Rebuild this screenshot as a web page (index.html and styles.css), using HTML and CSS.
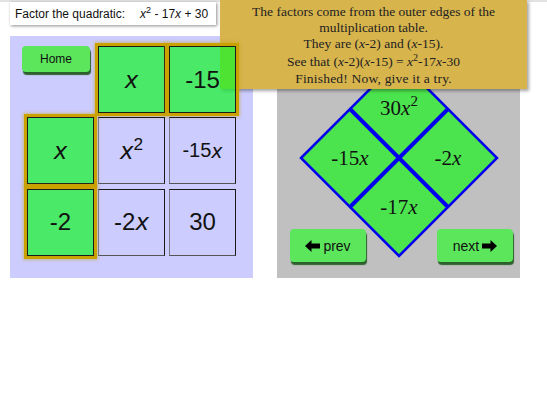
FILE: index.html
```html
<!DOCTYPE html>
<html lang="en">
<head>
<meta charset="utf-8">
<title>Factor the quadratic</title>
<link rel="stylesheet" href="styles.css">
</head>
<body>
<div class="topbar"></div>
<header class="titlebar">
  <div class="title-box">
    <span>Factor the quadratic:</span>
    <span class="expr"><i>x</i><sup>2</sup> - 17<i>x</i> + 30</span>
  </div>
</header>
<main class="panels">
  <section class="table-panel">
    <div class="grid">
      <div class="corner"><button class="btn home">Home</button></div>
      <div class="cell factor"><i class="var">x</i></div>
      <div class="cell factor">-15</div>
      <div class="cell factor"><i class="var">x</i></div>
      <div class="cell product"><span><i class="var">x</i><sup>2</sup></span></div>
      <div class="cell product small">-15<i class="var">x</i></div>
      <div class="cell factor">-2</div>
      <div class="cell product">-2<i class="var">x</i></div>
      <div class="cell product">30</div>
    </div>
  </section>
  <section class="diamond-panel">
    <svg class="diamond" width="243" height="242" viewBox="0 0 243 242">
      <g class="tiles">
        <polygon points="122,24 170.5,72.5 122,121 73.5,72.5"/>
        <polygon points="24,122 72.5,73.5 121,122 72.5,170.5"/>
        <polygon points="123,122 171.5,73.5 220,122 171.5,170.5"/>
        <polygon points="122,123 170.5,171.5 122,220 73.5,171.5"/>
      </g>
      <text x="122" y="79">30<tspan font-style="italic">x</tspan><tspan class="sup" dy="-9">2</tspan></text>
      <text x="73" y="129">-15<tspan font-style="italic">x</tspan></text>
      <text x="171" y="129">-2<tspan font-style="italic">x</tspan></text>
      <text x="122" y="178">-17<tspan font-style="italic">x</tspan></text>
    </svg>
    <div class="nav">
      <button class="btn nav-btn">
        <svg class="arrow" width="15" height="12" viewBox="0 0 15 12"><polygon points="0,6 6.5,0 6.5,3.5 15,3.5 15,8.5 6.5,8.5 6.5,12"/></svg>
        <span>prev</span>
      </button>
      <button class="btn nav-btn">
        <span>next</span>
        <svg class="arrow" width="15" height="12" viewBox="0 0 15 12"><polygon points="15,6 8.5,0 8.5,3.5 0,3.5 0,8.5 8.5,8.5 8.5,12"/></svg>
      </button>
    </div>
  </section>
</main>
<aside class="tip">
  <p>The factors come from the outer edges of the</p>
  <p>multiplication table.</p>
  <p>They are (<i>x</i>-2) and (<i>x</i>-15).</p>
  <p class="l4">See that (<i>x</i>-2)(<i>x</i>-15) = <i>x</i><sup>2</sup>-17<i>x</i>-30</p>
  <p class="l5">Finished! Now, give it a try.</p>
</aside>
</body>
</html>
```

FILE: styles.css
```css
body {
  margin: 0;
  background: #ffffff;
  font-family: "Liberation Sans", Arial, sans-serif;
  color: #111;
}

.topbar {
  height: 2px;
  background: #e2e2e2;
}

.titlebar {
  padding-left: 10px;
  height: 23px;
}

.title-box {
  display: inline-flex;
  align-items: center;
  box-sizing: border-box;
  width: 206px;
  height: 23px;
  padding-left: 5px;
  background: #ffffff;
  box-shadow: 1px 1px 3px rgba(0, 0, 0, 0.45);
  font-size: 12px;
  color: #111;
  white-space: nowrap;
}

.expr {
  margin-left: 15px;
}

.expr sup {
  font-size: 0.75em;
  line-height: 0;
}

.panels {
  display: flex;
  gap: 24px;
  margin-top: 11px;
  padding-left: 10px;
}

.table-panel {
  box-sizing: border-box;
  width: 243px;
  height: 242px;
  padding: 10px 0 0 17px;
  background: #ccccff;
}

.grid {
  display: grid;
  grid-template-columns: repeat(3, 67px);
  grid-template-rows: repeat(3, 67px);
  column-gap: 4px;
  row-gap: 4.3px;
}

.corner {
  display: flex;
  align-items: flex-start;
}

.cell {
  position: relative;
  z-index: 6;
  box-sizing: border-box;
  display: flex;
  align-items: center;
  justify-content: center;
  border: 1px solid #1a1a1a;
  font-size: 24px;
  color: #111;
}

.cell .var {
  font-family: "DejaVu Sans", sans-serif;
  font-size: 0.95em;
}

.cell sup {
  font-size: 0.72em;
  line-height: 0;
  vertical-align: 0.55em;
}

.factor {
  background: rgba(20, 245, 40, 0.7);
  box-shadow: 0 0 0 3px #c9a200, 0 0 3px 4px rgba(201, 162, 0, 0.45);
}

.product {
  background: transparent;
  border-left-color: #7a7a8a;
  border-bottom-color: #555;
}

.product.small {
  font-size: 20px;
}

.btn {
  border: 0;
  border-radius: 4px;
  padding: 0;
  background: #5ce65c;
  box-shadow: 1px 3px 1px #2c602c;
  font-family: "Liberation Sans", Arial, sans-serif;
  color: #111;
}

.home {
  width: 68px;
  height: 26px;
  margin-left: -5px;
  font-size: 12px;
}

.diamond-panel {
  display: grid;
  width: 243px;
  height: 242px;
  background: #c0c0c0;
}

.diamond-panel > * {
  grid-area: 1 / 1;
}

.diamond .tiles polygon {
  fill: #4ce44e;
  stroke: #0000ee;
  stroke-width: 2.5;
  stroke-linejoin: miter;
}

.diamond text {
  font-family: "Liberation Serif", "Times New Roman", serif;
  font-size: 21px;
  fill: #111;
  text-anchor: middle;
}

.diamond .sup {
  font-size: 15px;
}

.nav {
  align-self: end;
  display: flex;
  justify-content: space-between;
  padding: 0 7px 16px 13px;
}

.nav-btn {
  display: inline-flex;
  align-items: center;
  justify-content: center;
  gap: 3px;
  width: 76px;
  height: 33px;
  font-size: 14px;
}

.arrow polygon {
  fill: #000;
}

.tip {
  position: absolute;
  left: 220px;
  top: 0;
  z-index: 5;
  box-sizing: border-box;
  width: 307px;
  height: 89px;
  padding-top: 4px;
  background: #d8b44c;
  box-shadow: 2px 2px 3px rgba(0, 0, 0, 0.35);
  text-align: center;
  font-family: "Liberation Serif", "Times New Roman", serif;
  font-size: 13.5px;
  line-height: 16px;
  color: #222;
}

.tip p {
  margin: 0;
}

.tip .l4 {
  line-height: 19px;
}

.tip .l5 {
  letter-spacing: 0.2px;
}

.tip sup {
  font-size: 0.75em;
  line-height: 0;
}
```
